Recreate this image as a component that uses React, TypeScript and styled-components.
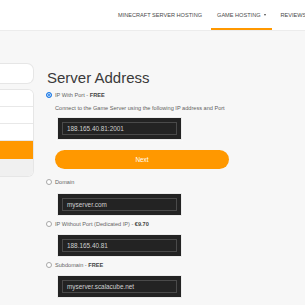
import styled, { createGlobalStyle } from "styled-components";

const GlobalStyle = createGlobalStyle`
  html, body {
    margin: 0;
    padding: 0;
    background: #f7f7f7;
    font-family: "Liberation Sans", Arial, sans-serif;
    overflow: hidden;
  }
`;

const colors = {
  orange: "#ff9800",
  dark: "#232323",
  text: "#555555",
  heading: "#3a3a3a",
  blue: "#1e7be6",
};

const Header = styled.header`
  height: 30px;
  background: #ffffff;
  border-bottom: 1px solid #ececec;
  display: flex;
  align-items: stretch;
  padding-left: 112px;
  gap: 3px;
  overflow: hidden;
  white-space: nowrap;
`;

const NavItem = styled.div<{ $active?: boolean }>`
  display: flex;
  align-items: center;
  padding: 0 6px;
  font-size: 5.6px;
  color: #4a4a4a;
  text-transform: uppercase;
  box-sizing: border-box;
  border-bottom: 2px solid ${(p) => (p.$active ? colors.orange : "transparent")};
  padding-top: 1px;
`;

const Caret = styled.span`
  display: inline-block;
  margin-left: 3px;
  width: 0;
  height: 0;
  border-left: 1.5px solid transparent;
  border-right: 1.5px solid transparent;
  border-top: 2px solid #4a4a4a;
`;

const Body = styled.div`
  display: flex;
  gap: 12px;
`;

const Sidebar = styled.aside`
  width: 34px;
  padding-top: 32px;
  display: flex;
  flex-direction: column;
  gap: 5px;
`;

const SideCard = styled.div`
  height: 19px;
  background: #ffffff;
  border: 1px solid #e6e6e6;
  border-left: none;
  border-radius: 0 7px 7px 0;
`;

const SideMenu = styled.div`
  background: #ffffff;
  border: 1px solid #e6e6e6;
  border-left: none;
  border-radius: 0 6px 6px 0;
  overflow: hidden;
`;

const SideRow = styled.div<{ $tone?: "orange" | "muted" }>`
  height: ${(p) => (p.$tone ? 17 : 16)}px;
  background: ${(p) =>
    p.$tone === "orange" ? colors.orange : p.$tone === "muted" ? "#f0f0f0" : "#ffffff"};
  border-top: 1px solid ${(p) => (p.$tone === "muted" ? colors.orange : "#e8e8e8")};
  &:first-child {
    border-top: none;
  }
`;

const Main = styled.main`
  padding-top: 38px;
  width: 190px;
`;

const Title = styled.h1`
  margin: 0;
  font-size: 15px;
  line-height: 18px;
  font-weight: normal;
  color: ${colors.heading};
  padding-left: 1px;
`;

const Option = styled.label<{ $gap: number }>`
  display: flex;
  align-items: center;
  gap: 3px;
  margin-top: ${(p) => p.$gap}px;
  height: 8px;
  font-size: 5.6px;
  color: #666666;
  white-space: nowrap;
`;

const Radio = styled.span<{ $checked?: boolean }>`
  width: 6px;
  height: 6px;
  box-sizing: border-box;
  border-radius: 50%;
  border: ${(p) => (p.$checked ? `1px solid ${colors.blue}` : "0.6px solid #a8a8a8")};
  background: ${(p) => (p.$checked ? colors.blue : "#ffffff")};
  box-shadow: ${(p) => (p.$checked ? "inset 0 0 0 1px #d6e7fc" : "none")};
`;

const Price = styled.b`
  color: #444444;
`;

const Hint = styled.p`
  margin: 5px 0 0 9px;
  font-size: 5.6px;
  line-height: 8px;
  color: #5f5f5f;
  white-space: nowrap;
`;

const AddressBox = styled.div<{ $gap: number }>`
  margin: ${(p) => p.$gap}px 0 0 11px;
  width: 125px;
  height: 23px;
  box-sizing: border-box;
  background: ${colors.dark};
  border: 1px solid #ececec;
  outline: 1px solid #f9f9f9;
  padding: 4px;
  display: flex;
`;

const AddressField = styled.div`
  flex: 1;
  border: 1px solid #4a4a4a;
  display: flex;
  align-items: center;
  padding-left: 4px;
  font-size: 6.4px;
  color: #d0d0d0;
`;

const NextButton = styled.button`
  display: block;
  margin: 10px 0 0 9px;
  width: 174px;
  height: 19px;
  border: none;
  border-radius: 10px;
  background: ${colors.orange};
  color: #ffffff;
  font-family: "Liberation Sans", Arial, sans-serif;
  font-size: 6.4px;
  padding: 0;
`;

export default function App() {
  return (
    <>
      <GlobalStyle />
      <Header>
        <NavItem>Minecraft Server Hosting</NavItem>
        <NavItem $active>
          Game Hosting
          <Caret />
        </NavItem>
        <NavItem>Reviews</NavItem>
      </Header>
      <Body>
        <Sidebar>
          <SideCard />
          <SideMenu>
            <SideRow />
            <SideRow />
            <SideRow />
            <SideRow $tone="orange" />
            <SideRow $tone="muted" />
          </SideMenu>
        </Sidebar>
        <Main>
          <Title>Server Address</Title>
          <Option $gap={4}>
            <Radio $checked />
            <span>
              IP With Port - <Price>FREE</Price>
            </span>
          </Option>
          <Hint>Connect to the Game Server using the following IP address and Port</Hint>
          <AddressBox $gap={5}>
            <AddressField>188.165.40.81:2001</AddressField>
          </AddressBox>
          <NextButton>Next</NextButton>
          <Option $gap={9}>
            <Radio />
            <span>Domain</span>
          </Option>
          <AddressBox $gap={7}>
            <AddressField>myserver.com</AddressField>
          </AddressBox>
          <Option $gap={4}>
            <Radio />
            <span>
              IP Without Port (Dedicated IP) - <Price>€9.70</Price>
            </span>
          </Option>
          <AddressBox $gap={6}>
            <AddressField>188.165.40.81</AddressField>
          </AddressBox>
          <Option $gap={4}>
            <Radio />
            <span>
              Subdomain - <Price>FREE</Price>
            </span>
          </Option>
          <AddressBox $gap={6}>
            <AddressField>myserver.scalacube.net</AddressField>
          </AddressBox>
        </Main>
      </Body>
    </>
  );
}
